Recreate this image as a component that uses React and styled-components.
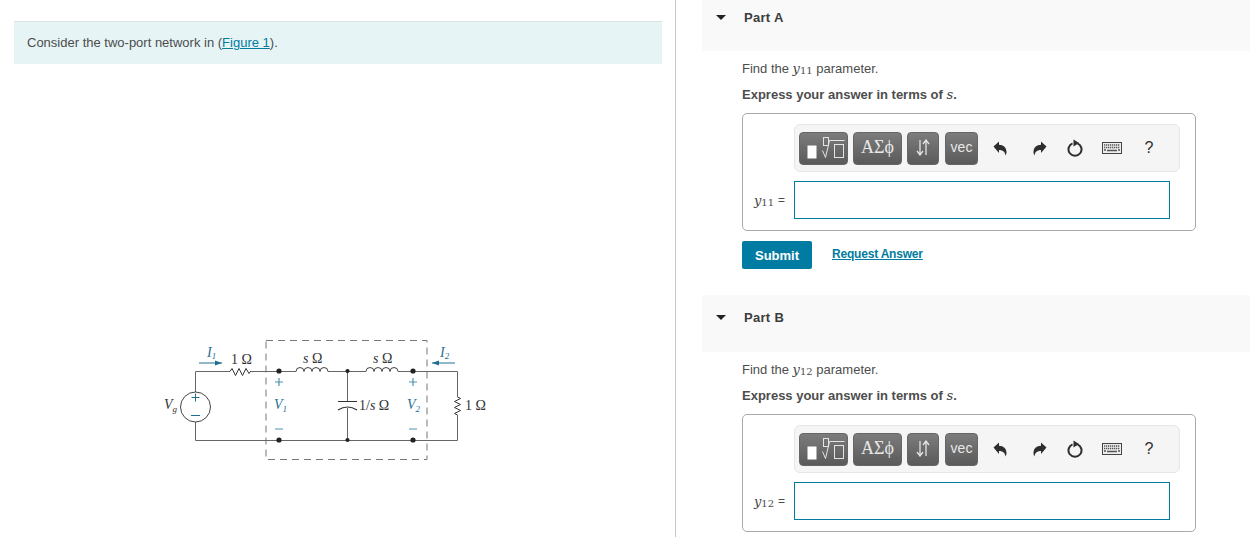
import React from "react";
import styled, { createGlobalStyle } from "styled-components";

const GlobalStyle = createGlobalStyle`
  html, body {
    margin: 0;
    padding: 0;
    height: 100%;
    overflow: hidden;
    background: #fff;
  }
  body {
    font-family: "Liberation Sans", Arial, sans-serif;
    font-size: 13px;
    color: #4d4d4d;
  }
`;

const Page = styled.div`
  display: flex;
  width: 1250px;
  height: 537px;
  overflow: hidden;
`;

const LeftPane = styled.div`
  width: 676px;
  height: 537px;
  flex: none;
  box-sizing: border-box;
  border-right: 1px solid #c8c8c8;
  padding: 21px 13px 0 14px;
`;

const Intro = styled.div`
  height: 43px;
  box-sizing: border-box;
  border-top: 1px solid #dde3e5;
  background: #e6f4f6;
  padding-left: 13px;
  line-height: 41px;
  font-size: 13px;
`;

const TextLink = styled.a`
  color: #007c9e;
  text-decoration: underline;
`;

const RequestLink = styled(TextLink)`
  font-size: 12px;
  font-weight: 700;
  letter-spacing: -0.2px;
  margin-top: -2px;
`;

const Figure = styled.div`
  margin: 266px 0 0 136px;
  width: 350px;
  height: 135px;
`;

const RightPane = styled.div`
  flex: 1;
  padding-left: 26px;
  min-width: 0;
`;

const PartHeader = styled.div`
  display: flex;
  align-items: flex-start;
  height: ${(p) => p.$height}px;
  margin-top: ${(p) => p.$top}px;
  background: #f9f9f9;
  padding: ${(p) => p.$pad}px 0 0 14px;
  box-sizing: border-box;
  font-size: 13px;
  font-weight: 700;
  letter-spacing: 0.3px;
  color: #3c3c3c;
  line-height: 15px;
`;

const Caret = styled.span`
  width: 0;
  height: 0;
  margin: 5px 18px 0 0;
  border-left: 5px solid transparent;
  border-right: 5px solid transparent;
  border-top: 5px solid #222;
`;

const PartBody = styled.div`
  padding-left: 40px;
`;

const Prompt = styled.p`
  margin: ${(p) => p.$top}px 0 0;
  height: 16px;
  line-height: 16px;
  font-size: 13px;
  font-weight: ${(p) => (p.$bold ? 700 : 400)};
`;

const MathVar = styled.span`
  font-family: "DejaVu Serif", serif;
  font-style: italic;
  font-weight: 400;
  font-size: 13px;
  color: #444;
`;

const MathSub = styled.span`
  font-family: "DejaVu Serif", serif;
  font-size: 10px;
  font-weight: 400;
  vertical-align: -1px;
  line-height: 0;
`;

const AnswerBox = styled.div`
  margin-top: 10px;
  width: 454px;
  height: 118px;
  box-sizing: border-box;
  border: 1px solid #aaa;
  border-radius: 5px;
  padding: 10px 25px 0 11px;
  display: grid;
  grid-template-columns: 40px 1fr;
  grid-template-rows: 48px 38px;
  row-gap: 9px;
`;

const Toolbar = styled.div`
  grid-column: 2;
  width: 386px;
  box-sizing: border-box;
  display: flex;
  align-items: center;
  padding-left: 4px;
  background: #f5f5f5;
  border: 1px solid #e6e6e6;
  border-radius: 6px;
`;

const TemplateButton = styled.div`
  width: ${(p) => p.$width}px;
  height: 33px;
  margin-right: ${(p) => p.$gap}px;
  flex: none;
  box-sizing: border-box;
  display: flex;
  align-items: center;
  justify-content: center;
  border: 1px solid #666;
  border-radius: 4px;
  background: linear-gradient(#7c7c7c, #5a5a5a);
  color: #e8e8e8;
  font-family: ${(p) => (p.$serif ? '"Liberation Serif", serif' : '"Liberation Sans", sans-serif')};
  font-size: ${(p) => (p.$serif ? 18 : 14)}px;
  padding-bottom: 2px;
`;

const ToolIcon = styled.div`
  width: ${(p) => p.$width}px;
  flex: none;
  display: flex;
  align-items: center;
  justify-content: center;
  color: #2e2e2e;
  font-size: 16px;
`;

const Label = styled.div`
  display: flex;
  align-items: center;
  gap: 4px;
  font-size: 12px;
  white-space: nowrap;
`;

const AnswerInput = styled.div`
  width: 376px;
  box-sizing: border-box;
  border: 1px solid #007a9e;
  background: #fff;
`;

const Actions = styled.div`
  display: flex;
  align-items: center;
  gap: 20px;
  margin-top: 10px;
`;

const Submit = styled.button`
  width: 70px;
  height: 28px;
  padding: 0;
  border: none;
  border-radius: 2px;
  background: #007ca3;
  color: #fff;
  font-family: "Liberation Sans", sans-serif;
  font-size: 13px;
  font-weight: 700;
`;

const Wire = styled.path`
  fill: none;
  stroke: #666;
  stroke-width: 1;
`;

const CircuitText = styled.text`
  font-family: "Liberation Serif", serif;
  font-size: ${(p) => p.$size || 14}px;
  font-style: ${(p) => (p.$italic ? "italic" : "normal")};
  fill: ${(p) => (p.$teal ? "#1f7090" : "#333")};
`;

const Dot = ({ x, y, r = 2.6 }) => <circle cx={x} cy={y} r={r} fill="#222" />;

const Arrow = ({ x1, x2 }) => {
  const dir = x2 > x1 ? -1 : 1;
  return (
    <g fill="#1f7090">
      <path d={`M${x1} 33H${x2}`} stroke="#1f7090" strokeWidth="1" />
      <path d={`M${x2} 33l${dir * 7} -2.5v5z`} />
    </g>
  );
};

const Circuit = () => (
  <svg width="350" height="135" viewBox="0 0 350 135">
    <path d="M116 10.5H277V129.5H116Z" fill="none" stroke="#777" strokeWidth="1" strokeDasharray="7 5" />
    <Wire d="M45.5 62V41.5H80M100 41.5H146M178 41.5H216M248 41.5H307.5V67M307.5 85V110.5H45.5V92" />
    <Wire d="M197.5 41.5V71M197.5 78V110.5" />
    <path d="M80 41.5l2-3 3.5 7 3.5-7 3.5 7 3.5-7 3 5 1.5-2" fill="none" stroke="#333" strokeWidth="1" />
    <path d="M307.5 67l3 1.5-6 3 6 3-6 3 6 3-6 3 3 1.5" fill="none" stroke="#333" strokeWidth="1" />
    <path d="M146 41.5a4 4 0 0 1 8 0a4 4 0 0 1 8 0a4 4 0 0 1 8 0a4 4 0 0 1 8 0" fill="none" stroke="#444" strokeWidth="1" />
    <path d="M216 41.5a4 4 0 0 1 8 0a4 4 0 0 1 8 0a4 4 0 0 1 8 0a4 4 0 0 1 8 0" fill="none" stroke="#444" strokeWidth="1" />
    <path d="M188 71.5H207M188 80Q197.5 74 207 80" fill="none" stroke="#333" strokeWidth="1.2" />
    <circle cx="45.5" cy="77" r="15" fill="#fff" stroke="#444" strokeWidth="1" />
    <path d="M41.5 67.5h8M45.5 63.5v8M41 85.5h9" stroke="#1f7090" strokeWidth="1" fill="none" />
    <Dot x={129} y={41} />
    <Dot x={197.5} y={41} r={2.1} />
    <Dot x={263} y={41} />
    <Dot x={129} y={110} />
    <Dot x={197.5} y={110} r={2.1} />
    <Dot x={263} y={110} />
    <Arrow x1={49} x2={72} />
    <Arrow x1={305} x2={282} />
    <path d="M125 52h8M129 48v8M125 99h8M259 52h8M263 48v8M259 99h8" stroke="#4d94ad" strokeWidth="1.2" fill="none" />
    <CircuitText x="57" y="27" $italic $teal>I<tspan fontSize="9" dy="2">1</tspan></CircuitText>
    <CircuitText x="290" y="27" $italic $teal>I<tspan fontSize="9" dy="2">2</tspan></CircuitText>
    <CircuitText x="81" y="34">1 Ω</CircuitText>
    <CircuitText x="153" y="33"><tspan fontStyle="italic">s</tspan> Ω</CircuitText>
    <CircuitText x="223" y="33"><tspan fontStyle="italic">s</tspan> Ω</CircuitText>
    <CircuitText x="14" y="79" $italic>V<tspan fontSize="9" dy="3">g</tspan></CircuitText>
    <CircuitText x="124" y="79" $italic $teal>V<tspan fontSize="9" dy="3">1</tspan></CircuitText>
    <CircuitText x="257" y="79" $italic $teal>V<tspan fontSize="9" dy="3">2</tspan></CircuitText>
    <CircuitText x="209" y="80">1/<tspan fontStyle="italic">s</tspan> Ω</CircuitText>
    <CircuitText x="315" y="80">1 Ω</CircuitText>
  </svg>
);

const TemplatesIcon = () => (
  <svg width="42" height="24" viewBox="0 0 42 24">
    <rect x="4.5" y="10.5" width="9" height="13" fill="#fff" />
    <g fill="none" stroke="#e4e4e4" strokeWidth="1">
      <path d="M19.5 15.5l3 7 4-17h15" />
      <rect x="20.5" y="2.5" width="5" height="8" />
      <rect x="31.5" y="9.5" width="9" height="13" />
    </g>
  </svg>
);

const UpDownIcon = () => (
  <svg width="16" height="17" viewBox="0 0 16 17" fill="none" stroke="#e4e4e4" strokeWidth="1.3">
    <path d="M5 1v14M2 12l3 4 3-4" />
    <path d="M11 16V2M8 5l3-4 3 4" />
  </svg>
);

const UndoIcon = ({ flip }) => (
  <svg width="14" height="15" viewBox="0 0 14 15" style={flip ? { transform: "scaleX(-1)" } : undefined}>
    <path d="M0.5 5.5L6 0.5v3.2c4.5 0 7.5 3 7.5 7.3 0 1.5-.4 2.7-1 3.5-.3-3.5-2.5-5.6-6.5-5.6v3.100z" fill="#2e2e2e" />
  </svg>
);

const ResetIcon = () => (
  <svg width="16" height="18" viewBox="0 0 16 18" fill="none">
    <path d="M5.5 4.3A6.5 6.5 0 1 0 10.5 4.3" stroke="#2e2e2e" strokeWidth="2" />
    <path d="M6.5 0.5l5.5 3.5-5.5 3.5z" fill="#2e2e2e" />
  </svg>
);

const KeyboardIcon = () => (
  <svg width="20" height="12" viewBox="0 0 20 12">
    <rect x="0.5" y="0.5" width="19" height="11" fill="#eee" stroke="#444" />
    <path d="M2 3h16M2 5.5h16" stroke="#555" strokeWidth="1.3" strokeDasharray="1.3 .7" />
    <path d="M2 8h2M5 8.5h10M16 8h2" stroke="#555" strokeWidth="1.3" />
  </svg>
);

const AnswerEditor = ({ sub }) => (
  <AnswerBox>
    <Toolbar>
      <TemplateButton $width={49} $gap={5}><TemplatesIcon /></TemplateButton>
      <TemplateButton $width={49} $gap={5} $serif>ΑΣϕ</TemplateButton>
      <TemplateButton $width={32} $gap={6}><UpDownIcon /></TemplateButton>
      <TemplateButton $width={33} $gap={2}>vec</TemplateButton>
      <ToolIcon $width={40}><UndoIcon /></ToolIcon>
      <ToolIcon $width={40}><UndoIcon flip /></ToolIcon>
      <ToolIcon $width={30}><ResetIcon /></ToolIcon>
      <ToolIcon $width={44}><KeyboardIcon /></ToolIcon>
      <ToolIcon $width={30}>?</ToolIcon>
    </Toolbar>
    <Label>
      <span><MathVar>y</MathVar><MathSub>{sub}</MathSub></span> =
    </Label>
    <AnswerInput />
  </AnswerBox>
);

const Part = ({ name, sub, headerHeight, headerTop, headerPad, children }) => (
  <>
    <PartHeader $height={headerHeight} $top={headerTop} $pad={headerPad}>
      <Caret />
      {name}
    </PartHeader>
    <PartBody>
      <Prompt $top={10}>
        Find the <MathVar>y</MathVar><MathSub>{sub}</MathSub> parameter.
      </Prompt>
      <Prompt $top={10} $bold>
        Express your answer in terms of <MathVar>s</MathVar>.
      </Prompt>
      <AnswerEditor sub={sub} />
      {children}
    </PartBody>
  </>
);

export default function App() {
  return (
    <>
      <GlobalStyle />
      <Page>
        <LeftPane>
          <Intro>
            Consider the two-port network in (<TextLink href="#">Figure 1</TextLink>).
          </Intro>
          <Figure>
            <Circuit />
          </Figure>
        </LeftPane>
        <RightPane>
          <Part name="Part A" sub="11" headerHeight={51} headerTop={0} headerPad={10}>
            <Actions>
              <Submit>Submit</Submit>
              <RequestLink href="#">Request Answer</RequestLink>
            </Actions>
          </Part>
          <Part name="Part B" sub="12" headerHeight={57} headerTop={26} headerPad={15} />
        </RightPane>
      </Page>
    </>
  );
}
